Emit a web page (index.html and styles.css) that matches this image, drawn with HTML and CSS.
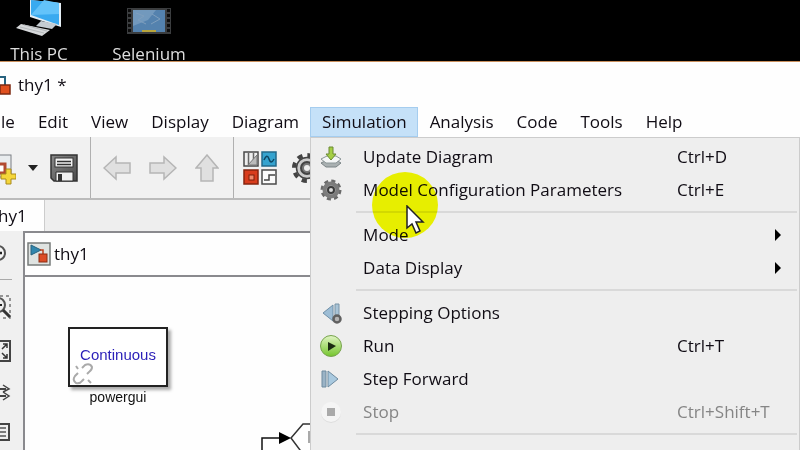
FILE: index.html
```
<!DOCTYPE html>
<html lang="en">
<head>
  <meta charset="UTF-8">
  <title>thy1 *</title>
  <link rel="stylesheet" href="styles.css">
</head>
<body>
  <div class="desktop">
    <div class="shortcut">
      <svg width="46" height="38" viewBox="0 0 46 38">
        <path d="M14 0 L45 3 V27 L14 17Z" fill="#e4eef5"/>
        <path d="M15 0 L43 3 V25 L15 15Z" fill="#39aaf0"/>
        <path d="M28 0 L43 3 V14 L15 15Z" fill="#63c3fa"/>
        <path d="M25 21 L41 24 L36 29 L20 26Z" fill="#c5ccd2"/>
        <path d="M5 24 L34 30 L26 36 L0 28Z" fill="#d6d8da"/>
        <path d="M4 27 L28 33 M8 25 L31 31" stroke="#b4b8bb" stroke-width="1" fill="none"/>
      </svg>
      <span>This PC</span>
    </div>
    <div class="shortcut">
      <svg width="46" height="38" viewBox="0 0 46 38">
        <rect x="1" y="8" width="44" height="26" fill="#3b3d3f"/>
        <path d="M3.500 9 V33 M42.500 9 V33" stroke="#0c0c0c" stroke-width="3" stroke-dasharray="3 2"/>
        <rect x="7" y="10" width="32" height="22" fill="#5482ae"/>
        <path d="M7 10 H30 L22 20 L7 26Z" fill="#7299bd"/>
        <path d="M10 13 L18 16 L12 20 L20 24 M26 14 L34 19 L25 24" stroke="#7f9fbd" fill="none"/>
        <rect x="16" y="30" width="14" height="2" fill="#b8a53c"/>
      </svg>
      <span>Selenium</span>
    </div>
  </div>

  <div class="window">
    <header class="titlebar">
      <svg width="24" height="24" viewBox="0 0 24 24">
        <path d="M2 2 L13 8 L2 14Z" fill="#2d87b5"/>
        <path d="M12 4 H18 V12" stroke="#28637f" stroke-width="2" fill="none"/>
        <rect x="13" y="12" width="10" height="9" fill="#e0501f" stroke="#7d2a12" stroke-width="1.500"/>
      </svg>
      <span>thy1 *</span>
    </header>

    <nav class="menubar">
      <button>File</button>
      <button>Edit</button>
      <button>View</button>
      <button>Display</button>
      <button>Diagram</button>
      <div class="menu-holder">
        <button class="open">Simulation</button>
        <div class="menu">
          <button class="item">
            <svg width="24" height="24" viewBox="0 0 24 24">
              <path d="M2 18 L8 15 H17 L22 18 L17 22 H7Z" fill="#a9b0b1" stroke="#7b8486"/>
              <path d="M2 14 L8 11 H17 L22 14 L17 18 H7Z" fill="#f4f6f6" stroke="#8c9698"/>
              <path d="M10 2 H14 V9 H17 L12 15 L7 9 H10Z" fill="#a5cf45" stroke="#6a8a35"/>
            </svg>
            <span>Update Diagram</span><kbd>Ctrl+D</kbd>
          </button>
          <button class="item">
            <svg width="24" height="24" viewBox="0 0 24 24">
              <circle cx="12" cy="12" r="9" fill="none" stroke="#6a6a6a" stroke-width="3" stroke-dasharray="4 3.070"/>
              <circle cx="12" cy="12" r="6.500" fill="#aaa" stroke="#7c7c7c" stroke-width="4"/>
              <circle cx="12" cy="12" r="3" fill="#ddd" stroke="#3c3c3c" stroke-width="2"/>
            </svg>
            <span>Model Configuration Parameters</span><kbd>Ctrl+E</kbd>
          </button>
          <hr>
          <button class="item"><i></i><span>Mode</span><kbd></kbd><b class="sub"></b></button>
          <button class="item"><i></i><span>Data Display</span><kbd></kbd><b class="sub"></b></button>
          <hr>
          <button class="item">
            <svg width="24" height="24" viewBox="0 0 24 24">
              <path d="M14 4 V20 L4 12Z" fill="#9dbdd5" stroke="#7090a8"/>
              <path d="M16 3 H20 V20 H16Z" fill="#a9c4d7" stroke="#7893a6"/>
              <circle cx="18" cy="18" r="3.500" fill="#b4b4b4" stroke="#606060" stroke-width="2.500"/>
            </svg>
            <span>Stepping Options</span>
          </button>
          <button class="item">
            <svg width="24" height="24" viewBox="0 0 24 24">
              <defs>
                <linearGradient id="green" x1="0" y1="0" x2="0" y2="1">
                  <stop offset="0" stop-color="#e2f5c5"/>
                  <stop offset="1" stop-color="#74c52c"/>
                </linearGradient>
              </defs>
              <circle cx="12" cy="12" r="10.500" fill="url(#green)" stroke="#78a44e"/>
              <path d="M9 8 L17 12 L9 17Z" fill="#1c2b12"/>
            </svg>
            <span>Run</span><kbd>Ctrl+T</kbd>
          </button>
          <button class="item">
            <svg width="24" height="24" viewBox="0 0 24 24">
              <path d="M3 4 H7 V20 H3Z" fill="#9ab3c6" stroke="#6f8ba0"/>
              <path d="M9 4 L19 12 L9 20Z" fill="#a9c9df" stroke="#6f8ba0"/>
            </svg>
            <span>Step Forward</span>
          </button>
          <button class="item" disabled>
            <svg width="24" height="24" viewBox="0 0 24 24">
              <circle cx="12" cy="13" r="10" fill="#dedede"/>
              <circle cx="12" cy="12" r="10" fill="#f5f5f5"/>
              <rect x="8" y="8" width="8" height="8" fill="#aaa"/>
            </svg>
            <span>Stop</span><kbd>Ctrl+Shift+T</kbd>
          </button>
          <hr>
          <button class="item" disabled><i></i><span>Output</span></button>
        </div>
      </div>
      <button>Analysis</button>
      <button>Code</button>
      <button>Tools</button>
      <button>Help</button>
    </nav>

    <div class="toolbar">
      <div class="group file-group">
        <button aria-label="New">
          <svg width="32" height="34" viewBox="0 0 32 34">
            <rect x="2" y="4" width="25" height="22" fill="#e9ecee" stroke="#7b7f83"/>
            <path d="M5 9 L13 14 L5 19Z" fill="#2d87b5"/>
            <path d="M13 13 H21 V22 H14" fill="#fff" stroke="#b24a30" stroke-width="3"/>
            <path d="M22 18 H27 V23 H32 V28 H27 V33 H22 V28 H17 V23 H22Z" fill="#f5d63a" stroke="#a98a1c"/>
          </svg>
        </button>
        <button aria-label="New options" class="drop">
          <svg width="12" height="8" viewBox="0 0 12 8"><path d="M1 1 H11 L6 7Z" fill="#222"/></svg>
        </button>
        <button aria-label="Save">
          <svg width="28" height="28" viewBox="0 0 28 28">
            <defs>
              <linearGradient id="disk" x1="0" y1="0" x2="1" y2="1">
                <stop offset="0" stop-color="#8a8a8a"/>
                <stop offset="1" stop-color="#4a4a4a"/>
              </linearGradient>
            </defs>
            <path d="M1 1 H27 V27 H4 L1 24Z" fill="url(#disk)" stroke="#333" stroke-width="1.500"/>
            <rect x="5" y="4" width="18" height="9" fill="#f2f2f2" stroke="#333"/>
            <path d="M7 7.500 H21 M7 10.500 H21" stroke="#333" stroke-width="1.500"/>
            <path d="M6 27 V18 H23 V27Z" fill="#f2f2f2" stroke="#333"/>
            <rect x="8" y="20" width="4" height="7" fill="#333"/>
          </svg>
        </button>
      </div>
      <div class="group nav-group">
        <button aria-label="Back">
          <svg width="28" height="26" viewBox="0 0 28 26"><path d="M1 13 L13 2 V8 H27 V18 H13 V24Z" fill="#e0e0e0" stroke="#b5b5b5" stroke-width="1.500"/></svg>
        </button>
        <button aria-label="Forward">
          <svg width="28" height="26" viewBox="0 0 28 26"><path d="M27 13 L15 2 V8 H1 V18 H15 V24Z" fill="#e0e0e0" stroke="#b5b5b5" stroke-width="1.500"/></svg>
        </button>
        <button aria-label="Up">
          <svg width="24" height="28" viewBox="0 0 24 28"><path d="M12 1 L23 14 H18 V27 H6 V14 H1Z" fill="#e0e0e0" stroke="#b5b5b5" stroke-width="1.500"/></svg>
        </button>
      </div>
      <div class="group">
        <button aria-label="Library Browser">
          <svg width="34" height="34" viewBox="0 0 34 34">
            <rect x="1" y="1" width="14" height="14" fill="#eee" stroke="#4a4a4a" stroke-width="1.500"/>
            <path d="M5.500 2 V14 M10.500 2 V10" stroke="#666" stroke-width="1.500"/>
            <path d="M14 4 L5 14 H14Z" fill="#bbb" stroke="#777"/>
            <rect x="19" y="1" width="14" height="14" fill="#35a3cf" stroke="#23698a" stroke-width="1.500"/>
            <path d="M21 9 Q24 2 26 8 T31 8" stroke="#0d4562" stroke-width="1.500" fill="none"/>
            <rect x="1" y="19" width="14" height="14" fill="#d93c1c" stroke="#85240f" stroke-width="1.500"/>
            <rect x="6" y="24" width="5" height="5" fill="#f08a6c" stroke="#7d1e0b"/>
            <rect x="19" y="19" width="14" height="14" fill="#fafafa" stroke="#4a4a4a" stroke-width="1.500"/>
            <path d="M21 29 H26 V24 H32" stroke="#444" stroke-width="1.500" fill="none"/>
          </svg>
        </button>
        <button aria-label="Model Configuration Parameters">
          <svg width="32" height="32" viewBox="0 0 32 32">
            <circle cx="16" cy="16" r="13" fill="none" stroke="#444" stroke-width="4" stroke-dasharray="5.200 5.010"/>
            <circle cx="16" cy="16" r="10.500" fill="#ccc" stroke="#444" stroke-width="1.500"/>
            <circle cx="16" cy="16" r="6" fill="#777" stroke="#444" stroke-width="2"/>
            <circle cx="16" cy="16" r="3" fill="#eee"/>
          </svg>
        </button>
      </div>
    </div>

    <div class="tabs"><button class="tab">thy1</button></div>

    <div class="workspace">
      <aside class="palette">
        <button aria-label="Zoom out">
          <svg width="26" height="24" viewBox="0 0 26 24"><circle cx="12" cy="12" r="7" fill="#f6f6f6" stroke="#555" stroke-width="2"/><path d="M8 12 H16" stroke="#222" stroke-width="2.500"/></svg>
        </button>
        <hr>
        <button aria-label="Zoom to area">
          <svg width="26" height="26" viewBox="0 0 26 26"><rect x="2" y="2" width="22" height="22" fill="none" stroke="#777" stroke-width="1.500" stroke-dasharray="3 3"/><circle cx="12" cy="11" r="7" fill="#eee" stroke="#555" stroke-width="2"/><path d="M8 11 H16" stroke="#222" stroke-width="2"/><path d="M17 16 L24 23" stroke="#333" stroke-width="3"/></svg>
        </button>
        <button aria-label="Fit to view">
          <svg width="26" height="22" viewBox="0 0 26 22"><rect x="2" y="1" width="22" height="20" fill="#eee" stroke="#444" stroke-width="2"/><path d="M16 9 L21 4 M17 4 H21 V8 M16 13 L21 18 M17 18 H21 V14 M10 9 L5 4 M5 8 V4 H9 M10 13 L5 18 M5 14 V18 H9" stroke="#333" stroke-width="1.500" fill="none"/></svg>
        </button>
        <button aria-label="Sample time">
          <svg width="26" height="20" viewBox="0 0 26 20"><path d="M2 7 H20 M2 14 H20" stroke="#444" stroke-width="2"/><path d="M17 3 L23 7 L17 10 M17 10 L23 14 L17 18" fill="none" stroke="#444" stroke-width="1.500"/></svg>
        </button>
        <button aria-label="Annotation">
          <svg width="26" height="20" viewBox="0 0 26 20"><rect x="3" y="2" width="20" height="16" fill="#eee" stroke="#444" stroke-width="2"/><path d="M7 6 H20 M7 10 H20 M7 14 H20" stroke="#555" stroke-width="1.500"/></svg>
        </button>
      </aside>

      <main class="editor">
        <div class="breadcrumb">
          <svg width="24" height="24" viewBox="0 0 24 24">
            <rect x="1" y="1" width="22" height="22" fill="#dfe3e1" stroke="#777b79" stroke-width="1.500"/>
            <path d="M4 3 L14 8 L4 13Z" fill="#3186ad" stroke="#28637f"/>
            <path d="M13 8 H16 V12" stroke="#c0401c" stroke-width="1.500" fill="none"/>
            <rect x="12" y="12" width="8" height="8" fill="#dc4c26" stroke="#8c2c12"/>
          </svg>
          <a href="#">thy1</a>
        </div>
        <div class="canvas">
          <div class="block">
            <div class="block-body">
              Continuous
              <svg class="link" width="22" height="22" viewBox="0 0 22 22">
                <path d="M10 5 L13 2 Q18 0 20 4 Q20 7 17 9 L15 11 M6 10 L3 13 Q0 17 4 20 Q8 21 10 18 L12 16 M4 3 L6 6 M16 17 L19 20" fill="none" stroke="#aaa" stroke-width="2"/>
              </svg>
            </div>
            <div class="block-name">powergui</div>
          </div>
          <svg class="wire" width="80" height="40" viewBox="0 0 80 40">
            <path d="M2 40 V18 H20" fill="none" stroke="#111" stroke-width="1.500"/>
            <path d="M19 12 V24 L31 18Z" fill="#000"/>
            <path d="M80 4 H43 L31 18 L43 34 H80" fill="#fff" stroke="#333" stroke-width="1.500"/>
            <path d="M49 11 V23" stroke="#aaa" stroke-width="2"/>
          </svg>
        </div>
      </main>
    </div>
  </div>

  <div class="highlight"></div>
  <div class="pointer">
    <svg width="20" height="30" viewBox="0 0 20 30">
      <path d="M1 1 V23 L6 19 L10 28 L14 26 L10 17 H17Z" fill="#fff" stroke="#222" stroke-width="1.500"/>
    </svg>
  </div>
</body>
</html>
```

FILE: styles.css
```
* {
  box-sizing: border-box;
}

body {
  margin: 0;
  height: 100vh;
  display: flex;
  flex-direction: column;
  overflow: hidden;
  background: #000;
  color: #100c14;
  font-family: "Open Sans", "Noto Sans", sans-serif;
  font-size: 17px;
  line-height: 24px;
}

button {
  font: inherit;
  color: inherit;
  background: none;
  border: none;
  padding: 0;
}

svg {
  display: block;
  flex-shrink: 0;
}

/* Desktop behind the window */
.desktop {
  display: flex;
  height: 61px;
  margin-left: -16px;
  overflow: hidden;
}

.shortcut {
  width: 110px;
  flex-shrink: 0;
  display: flex;
  flex-direction: column;
  align-items: center;
  gap: 4px;
  color: #ddd;
}

/* The window hangs off the left edge of the screen */
.window {
  flex: 1;
  min-height: 0;
  margin-left: -30px;
  display: flex;
  flex-direction: column;
  background: #fefefe;
  border-top: 1px solid #c98f5c;
}

.titlebar {
  display: flex;
  align-items: center;
  gap: 7px;
  padding: 10px 17px;
  height: 45px;
}

.menubar {
  display: flex;
  height: 30px;
  padding-left: 6px;
}

.menubar > button,
.menu-holder > button {
  height: 30px;
  padding: 0 11px 0 12px;
}

.menu-holder {
  position: relative;
}

.menu-holder > .open {
  padding: 0 10px 0 11px;
  background: #c5e1f8;
  border: 1px solid #a5cdef;
}

.menu {
  position: absolute;
  z-index: 10;
  top: 100%;
  left: 0;
  width: 490px;
  padding: 2px 0;
  background: #eee;
  border: 1px solid #ccc;
}

.item {
  display: grid;
  grid-template-columns: 32px 314px 1fr 24px;
  align-items: center;
  width: 100%;
  height: 33px;
  padding-left: 8px;
  text-align: left;
}

.item span,
.item kbd {
  padding-left: 12px;
  font: inherit;
}

.item:disabled {
  color: #858585;
}

.menu hr {
  height: 2px;
  margin: 5px 2px 5px 45px;
  border: none;
  background: #d9d9d9;
}

.sub {
  width: 0;
  height: 0;
  border-left: 6px solid #000;
  border-top: 6px solid transparent;
  border-bottom: 6px solid transparent;
}

.toolbar {
  display: flex;
  height: 63px;
  padding-left: 14px;
  background: #f1f1f1;
  border-bottom: 2px solid #bbb;
}

.group {
  display: flex;
  align-items: center;
  gap: 14px;
  padding: 0 9px;
}

.group + .group {
  border-left: 1px solid #b0b0b0;
}

.file-group {
  gap: 11px;
  padding: 0 12px 0 0;
}

.nav-group {
  gap: 18px;
  padding: 0 14px 0 12px;
}

.tabs {
  display: flex;
  height: 31px;
  background: #eee;
}

.tab {
  padding: 0 17px 0 22px;
  background: #fefefe;
  border-right: 1px solid #ccc;
}

.workspace {
  flex: 1;
  min-height: 0;
  display: flex;
}

.palette {
  width: 53px;
  padding: 10px 11px 0 16px;
  display: flex;
  flex-direction: column;
  flex-shrink: 0;
  gap: 20px;
  background: #f0f0f0;
}

.palette hr {
  width: 100%;
  height: 1px;
  margin: -6px 0;
  border: none;
  background: #aaa;
}

.editor {
  flex: 1;
  display: flex;
  flex-direction: column;
  border-top: 2px solid #8a8a8e;
  border-left: 2px solid #8a8a8e;
}

.breadcrumb {
  display: flex;
  align-items: center;
  gap: 3px;
  height: 44px;
  padding-left: 2px;
  border-bottom: 2px solid #8a8a8e;
}

.breadcrumb a {
  color: inherit;
  text-decoration: none;
}

.canvas {
  position: relative;
  flex: 1;
  font-family: "Liberation Sans", Arial, sans-serif;
}

.block {
  position: absolute;
  left: 43px;
  top: 50px;
  width: 100px;
  text-align: center;
  font-size: 14px;
  line-height: 20px;
}

.block-body {
  position: relative;
  height: 60px;
  padding-top: 16px;
  border: 2px solid #222;
  background: #fff;
  box-shadow: 3px 3px 3px #aaa;
  color: #2a1fb8;
  font-size: 15px;
}

.block-name {
  color: #111;
}

.link {
  position: absolute;
  left: 2px;
  bottom: 0;
}

.wire {
  position: absolute;
  left: 235px;
  top: 143px;
}

/* Mouse pointer with click highlight */
.highlight {
  position: absolute;
  z-index: 20;
  left: 372px;
  top: 172px;
  width: 66px;
  height: 66px;
  border-radius: 50%;
  background: #f8ff00;
  mix-blend-mode: multiply;
  pointer-events: none;
}

.pointer {
  position: absolute;
  z-index: 30;
  left: 406px;
  top: 205px;
  pointer-events: none;
}
```
